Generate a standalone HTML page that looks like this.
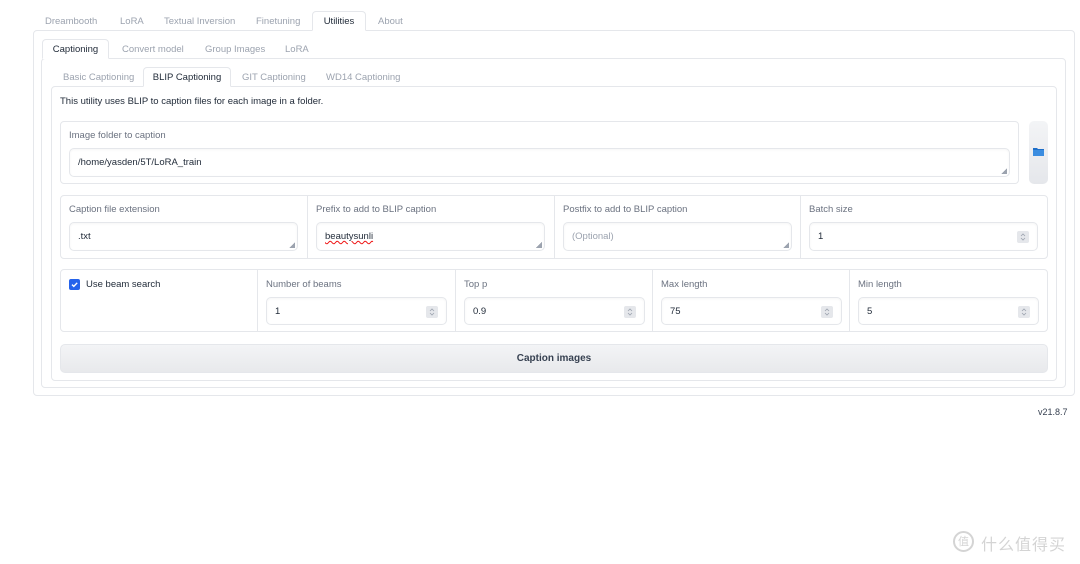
<!DOCTYPE html>
<html><head><meta charset="utf-8"><style>
*{box-sizing:border-box;margin:0;padding:0}
body{width:1080px;height:564px;background:#fff;font-family:"Liberation Sans",sans-serif;font-size:9.5px;color:#374151;position:relative;overflow:hidden}
.a{position:absolute}
.tab{position:absolute;color:#9ca3af;font-size:9.5px}
.tabsel{position:absolute;border:1px solid #e5e7eb;border-bottom:1px solid #fff;border-radius:4px 4px 0 0;background:#fff;color:#1f2937;text-align:center;z-index:2}
.panel{position:absolute;border:1px solid #e5e7eb;border-radius:4px;background:#fff}
.lbl{position:absolute;color:#6b7280;font-size:9.5px}
.inp{position:absolute;border:1px solid #e5e7eb;border-radius:5px;background:#fff;box-shadow:inset 0 1px 2px rgba(0,0,0,.04);font-size:9.5px;color:#1f2937;padding-left:8px;display:flex;align-items:center}
.spin{position:absolute;right:8px;top:8px;width:12px;height:12px;background:#e5e7eb;border-radius:2px}
.spin svg{display:block}
.grip{position:absolute;right:2px;bottom:2px;width:6px;height:6px;background:linear-gradient(135deg,transparent 50%,#9ca3af 50%)}
.vl{position:absolute;width:1px;background:#e5e7eb}
</style></head><body>
<div class="tab" style="left:45px;top:16px">Dreambooth</div>
<div class="tab" style="left:120px;top:16px">LoRA</div>
<div class="tab" style="left:164px;top:16px">Textual Inversion</div>
<div class="tab" style="left:256px;top:16px">Finetuning</div>
<div class="tabsel" style="left:312px;top:11px;width:54px;height:20px;line-height:19px">Utilities</div>
<div class="tab" style="left:378px;top:16px">About</div>
<div class="panel" style="left:33px;top:30px;width:1042px;height:366px"></div>
<div class="tabsel" style="left:42px;top:39px;width:67px;height:20px;line-height:19px">Captioning</div>
<div class="tab" style="left:122px;top:44px">Convert model</div>
<div class="tab" style="left:205px;top:44px">Group Images</div>
<div class="tab" style="left:285px;top:44px">LoRA</div>
<div class="panel" style="left:41px;top:58px;width:1025px;height:330px"></div>
<div class="tab" style="left:63px;top:72px">Basic Captioning</div>
<div class="tabsel" style="left:143px;top:67px;width:88px;height:20px;line-height:19px">BLIP Captioning</div>
<div class="tab" style="left:242px;top:72px">GIT Captioning</div>
<div class="tab" style="left:326px;top:72px">WD14 Captioning</div>
<div class="panel" style="left:51px;top:86px;width:1006px;height:295px"></div>
<div class="a" style="left:60px;top:96px;color:#1f2937">This utility uses BLIP to caption files for each image in a folder.</div>
<div class="panel" style="left:60px;top:121px;width:959px;height:63px"></div>
<div class="lbl" style="left:69px;top:130px">Image folder to caption</div>
<div class="inp" style="left:69px;top:148px;width:941px;height:29px">/home/yasden/5T/LoRA_train<div class="grip"></div></div>
<div class="a" style="left:1029px;top:121px;width:19px;height:63px;border-radius:5px;background:linear-gradient(#f3f4f6,#e5e7eb)"></div>
<svg class="a" style="left:1033px;top:147px" width="11" height="9" viewBox="0 0 11 9"><path d="M0 1h4l1 1h6v7H0z" fill="#1d6fc9"/><path d="M0 3h11v6H0z" fill="#3b8de0"/></svg>
<div class="panel" style="left:60px;top:195px;width:988px;height:64px"></div>
<div class="vl" style="left:307px;top:196px;height:62px"></div>
<div class="vl" style="left:554px;top:196px;height:62px"></div>
<div class="vl" style="left:800px;top:196px;height:62px"></div>
<div class="lbl" style="left:69px;top:204px">Caption file extension</div>
<div class="lbl" style="left:316px;top:204px">Prefix to add to BLIP caption</div>
<div class="lbl" style="left:563px;top:204px">Postfix to add to BLIP caption</div>
<div class="lbl" style="left:809px;top:204px">Batch size</div>
<div class="inp" style="left:69px;top:222px;width:229px;height:29px">.txt<div class="grip"></div></div>
<div class="inp" style="left:316px;top:222px;width:229px;height:29px"><span style="text-decoration:underline wavy #e11;text-decoration-thickness:1px">beautysunli</span><div class="grip"></div></div>
<div class="inp" style="left:563px;top:222px;width:229px;height:29px;color:#9ca3af">(Optional)<div class="grip"></div></div>
<div class="inp" style="left:809px;top:222px;width:229px;height:29px">1<div class="spin"><svg width="12" height="12"><path d="M4 5l2-2 2 2M4 7l2 2 2-2" stroke="#9ca3af" fill="none" stroke-width=".8"/></svg></div></div>
<div class="panel" style="left:60px;top:269px;width:988px;height:63px"></div>
<div class="vl" style="left:257px;top:270px;height:61px"></div>
<div class="vl" style="left:455px;top:270px;height:61px"></div>
<div class="vl" style="left:652px;top:270px;height:61px"></div>
<div class="vl" style="left:849px;top:270px;height:61px"></div>
<div class="a" style="left:69px;top:279px;width:11px;height:11px;background:#2563eb;border-radius:2px"><svg width="11" height="11" viewBox="0 0 11 11"><path d="M3 5.6l1.8 1.8L8.2 3.8" stroke="#fff" stroke-width="1.4" fill="none"/></svg></div>
<div class="a" style="left:86px;top:279px;color:#1f2937">Use beam search</div>
<div class="lbl" style="left:266px;top:279px">Number of beams</div>
<div class="lbl" style="left:464px;top:279px">Top p</div>
<div class="lbl" style="left:661px;top:279px">Max length</div>
<div class="lbl" style="left:858px;top:279px">Min length</div>
<div class="inp" style="left:266px;top:297px;width:181px;height:28px">1<div class="spin"><svg width="12" height="12"><path d="M4 5l2-2 2 2M4 7l2 2 2-2" stroke="#9ca3af" fill="none" stroke-width=".8"/></svg></div></div>
<div class="inp" style="left:464px;top:297px;width:181px;height:28px">0.9<div class="spin"><svg width="12" height="12"><path d="M4 5l2-2 2 2M4 7l2 2 2-2" stroke="#9ca3af" fill="none" stroke-width=".8"/></svg></div></div>
<div class="inp" style="left:661px;top:297px;width:181px;height:28px">75<div class="spin"><svg width="12" height="12"><path d="M4 5l2-2 2 2M4 7l2 2 2-2" stroke="#9ca3af" fill="none" stroke-width=".8"/></svg></div></div>
<div class="inp" style="left:858px;top:297px;width:181px;height:28px">5<div class="spin"><svg width="12" height="12"><path d="M4 5l2-2 2 2M4 7l2 2 2-2" stroke="#9ca3af" fill="none" stroke-width=".8"/></svg></div></div>
<div class="a" style="left:60px;top:344px;width:988px;height:29px;border:1px solid #e5e7eb;border-radius:5px;background:linear-gradient(#f3f4f6,#e8e9ec);text-align:center;line-height:27px;font-size:10px;font-weight:bold;color:#374151">Caption images</div>
<div class="a" style="left:1038px;top:407px;color:#374151;font-size:9px">v21.8.7</div>
<div class="a" style="left:953px;top:531px;width:21px;height:21px;border:2px solid #d4d4d4;border-radius:50%;color:#d4d4d4;font-size:11px;text-align:center;line-height:17px;font-family:'Noto Sans CJK SC',sans-serif">值</div>
<div class="a" style="left:981px;top:531px;color:#d4d4d4;font-size:16px;font-family:'Noto Sans CJK SC',sans-serif;letter-spacing:1px">什么值得买</div>
</body></html>
